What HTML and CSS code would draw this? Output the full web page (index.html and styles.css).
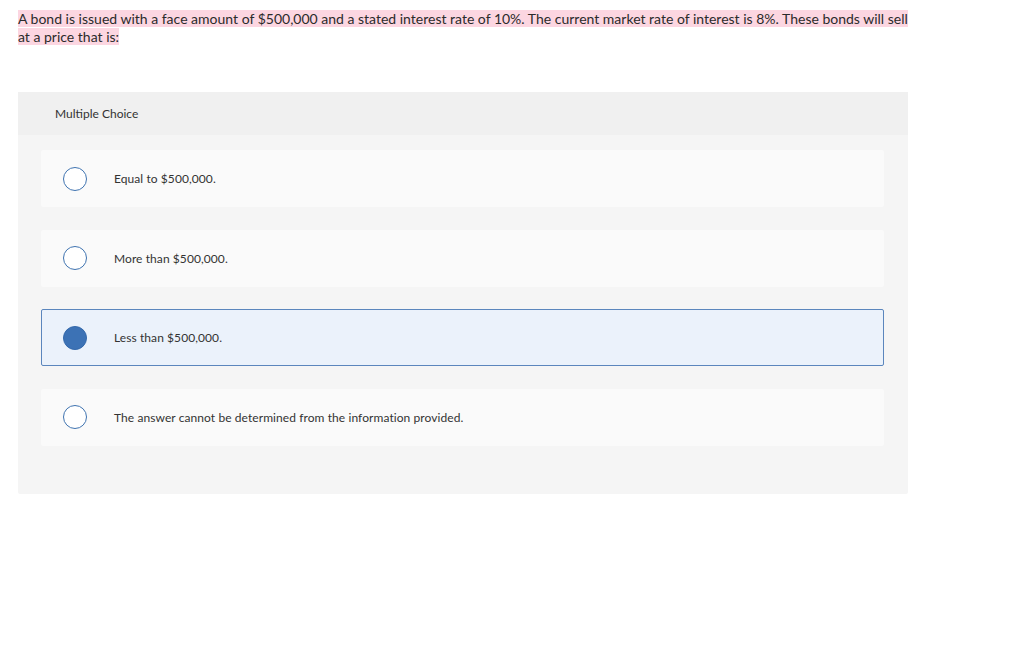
FILE: index.html
```html
<!DOCTYPE html>
<html>
<head>
<meta charset="utf-8">
<link rel="stylesheet" href="styles.css">
</head>
<body>
<main class="page">
  <p class="question"><span class="hl">A bond is issued with a face amount of $500,000 and a stated interest rate of 10%. The current market rate of interest is 8%. These bonds will sell at a price that is:</span></p>
  <section class="panel">
    <header class="panel-head">Multiple Choice</header>
    <div class="options">
      <label class="option"><span class="radio"></span><span class="opt-text">Equal to $500,000.</span></label>
      <label class="option"><span class="radio"></span><span class="opt-text">More than $500,000.</span></label>
      <label class="option selected"><span class="radio"></span><span class="opt-text">Less than $500,000.</span></label>
      <label class="option"><span class="radio"></span><span class="opt-text">The answer cannot be determined from the information provided.</span></label>
    </div>
  </section>
</main>
</body>
</html>
```
FILE: styles.css
```css
* { box-sizing: border-box; }
html, body { margin: 0; padding: 0; background: #fff; }
body { font-family: Lato, "Open Sans", sans-serif; color: #333; }
.page { width: 890px; margin-left: 18px; padding-top: 10px; }
.question { margin: 0; font-size: 14px; line-height: 18px; color: #2b2b2b; }
.hl { background: #fcd6e1; }
.panel { margin-top: 46px; background: #f5f5f5; border-radius: 2px; padding-bottom: 48px; }
.panel-head { background: #f0f0f0; height: 43px; padding-left: 37px; display: flex; align-items: center; font-size: 12px; color: #333; }
.options { display: flex; flex-direction: column; gap: 22.67px; padding: 15px 24px 0 23px; }
.option { display: flex; align-items: center; height: 57px; background: #fafafa; border-radius: 2px; padding-left: 22px; font-size: 12px; letter-spacing: 0.08px; color: #333; }
.radio { width: 24px; height: 24px; border-radius: 50%; border: 1px solid #3f73b0; background: #fff; flex: none; }
.opt-text { margin-left: 27px; }
.option.selected { background: #ebf2fb; border: 1px solid #5b86bd; padding-left: 21px; }
.option.selected .radio { background: #3c72b5; border-color: #3469ab; }
```
